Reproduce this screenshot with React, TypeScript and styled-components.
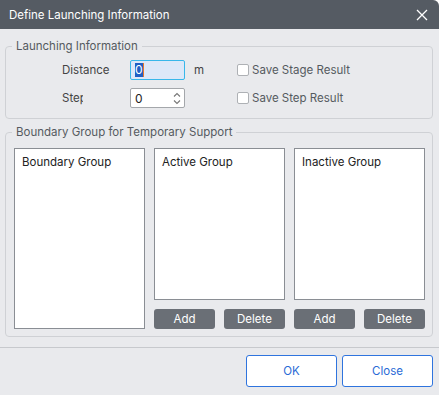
import React from "react";
import styled, { createGlobalStyle } from "styled-components";

const GlobalStyle = createGlobalStyle`
  html, body {
    margin: 0;
    padding: 0;
    background: #ffffff;
  }
  body {
    font-family: Inter, "Noto Sans", "Liberation Sans", sans-serif;
    font-size: 11px;
    color: #333;
  }
`;

const Dialog = styled.div`
  width: 439px;
  height: 395px;
  display: flex;
  flex-direction: column;
  background: #e9eaed;
  border-radius: 0 6px 0 0;
  overflow: hidden;
`;

const TitleBar = styled.div`
  height: 29px;
  flex: 0 0 29px;
  background: #555b63;
  color: #fff;
  display: flex;
  align-items: center;
  justify-content: space-between;
  padding: 0 9px 0 9px;
  font-size: 11.5px;
`;

const CloseIcon = styled.svg`
  width: 12px;
  height: 12px;
  margin-right: 2px;
`;

const Body = styled.div`
  flex: 1;
  display: flex;
  flex-direction: column;
  padding: 10px 6px 0 5px;
`;

const Group = styled.fieldset<{ $spaced?: boolean }>`
  margin: ${(p) => (p.$spaced ? "6px 0 0" : "0")};
  border: 1px solid #cfd1d5;
  border-radius: 4px;
  padding: 0;
  min-width: 0;
`;

const Legend = styled.legend`
  margin-left: 6px;
  padding: 0 4px;
  font-size: 11.5px;
  line-height: 14px;
  color: #555a60;
`;

const FormGrid = styled.div`
  display: grid;
  grid-template-columns: 68px 55px 52px auto;
  row-gap: 8px;
  align-items: center;
  padding: 7px 0 10px 56px;
`;

const FieldLabel = styled.div<{ $clip?: boolean }>`
  font-size: 11.5px;
  color: #444;
  white-space: nowrap;
  overflow: hidden;
  width: ${(p) => (p.$clip ? "21px" : "auto")};
`;

const TextBox = styled.div<{ $focused?: boolean }>`
  height: 20px;
  box-sizing: border-box;
  border: 1px solid ${(p) => (p.$focused ? "#39b7ea" : "#a4a7ab")};
  background: ${(p) => (p.$focused ? "#dde8f8" : "#fff")};
  border-radius: 2px;
  display: flex;
  align-items: center;
  padding-left: 4px;
  position: relative;
  font-size: 12px;
  color: #222;
`;

const Selected = styled.span`
  background: #1f5fc4;
  color: #fff;
  line-height: 14px;
  border-right: 1.5px solid #e8782a;
`;

const Spinner = styled.svg`
  position: absolute;
  right: 3px;
  top: 3px;
  width: 8px;
  height: 13px;
`;

const Unit = styled.div`
  padding-left: 9px;
  color: #444;
  font-size: 11.5px;
`;

const CheckRow = styled.label`
  display: flex;
  align-items: center;
  gap: 3px;
  color: #555a60;
  font-size: 11.5px;
`;

const Box = styled.span`
  width: 10px;
  height: 10px;
  border: 1px solid #aeb1b5;
  border-radius: 2px;
  background: #fff;
`;

const ListsRow = styled.div`
  display: flex;
  gap: 9px;
  padding: 9px 7px 7px 8px;
`;

const ListColumn = styled.div`
  width: 131px;
  height: 181px;
  display: flex;
  flex-direction: column;
  gap: 9px;
`;

const ListBox = styled.div`
  flex: 1;
  background: #fff;
  border: 1px solid #8a8e94;
  padding: 6px 7px;
  font-size: 11.5px;
  color: #222;
`;

const ButtonRow = styled.div`
  display: flex;
  gap: 9px;
`;

const GrayButton = styled.button`
  flex: 1;
  height: 20px;
  border: none;
  border-radius: 3px;
  background: #6a6f76;
  color: #fff;
  font-family: inherit;
  font-size: 11.5px;
  padding: 0;
`;

const Footer = styled.div`
  border-top: 1px solid #c7c9cd;
  margin: 10px -6px 0 -5px;
  display: flex;
  justify-content: flex-end;
  gap: 5px;
  padding: 7px 6px 0 0;
`;

const FooterButton = styled.button`
  width: 91px;
  height: 32px;
  box-sizing: border-box;
  background: #fff;
  border: 1px solid #2f74de;
  border-radius: 3px;
  color: #2a6ad6;
  font-family: inherit;
  font-size: 11.5px;
`;

export default function App() {
  return (
    <>
      <GlobalStyle />
      <Dialog>
        <TitleBar>
          <span>Define Launching Information</span>
          <CloseIcon viewBox="0 0 12 12">
            <path d="M1 1 L11 11 M11 1 L1 11" stroke="#fff" strokeWidth="1.3" />
          </CloseIcon>
        </TitleBar>
        <Body>
          <Group>
            <Legend>Launching Information</Legend>
            <FormGrid>
              <FieldLabel>Distance</FieldLabel>
              <TextBox $focused>
                <Selected>0</Selected>
              </TextBox>
              <Unit>m</Unit>
              <CheckRow>
                <Box />
                Save Stage Result
              </CheckRow>
              <FieldLabel $clip>Step</FieldLabel>
              <TextBox>
                0
                <Spinner viewBox="0 0 8 13">
                  <path d="M1 4.5 L4 1.5 L7 4.5 M1 8.5 L4 11.5 L7 8.5" fill="none" stroke="#777" strokeWidth="1.1" />
                </Spinner>
              </TextBox>
              <div />
              <CheckRow>
                <Box />
                Save Step Result
              </CheckRow>
            </FormGrid>
          </Group>
          <Group $spaced>
            <Legend>Boundary Group for Temporary Support</Legend>
            <ListsRow>
              <ListColumn>
                <ListBox>Boundary Group</ListBox>
              </ListColumn>
              <ListColumn>
                <ListBox>Active Group</ListBox>
                <ButtonRow>
                  <GrayButton>Add</GrayButton>
                  <GrayButton>Delete</GrayButton>
                </ButtonRow>
              </ListColumn>
              <ListColumn>
                <ListBox>Inactive Group</ListBox>
                <ButtonRow>
                  <GrayButton>Add</GrayButton>
                  <GrayButton>Delete</GrayButton>
                </ButtonRow>
              </ListColumn>
            </ListsRow>
          </Group>
          <Footer>
            <FooterButton>OK</FooterButton>
            <FooterButton>Close</FooterButton>
          </Footer>
        </Body>
      </Dialog>
    </>
  );
}
